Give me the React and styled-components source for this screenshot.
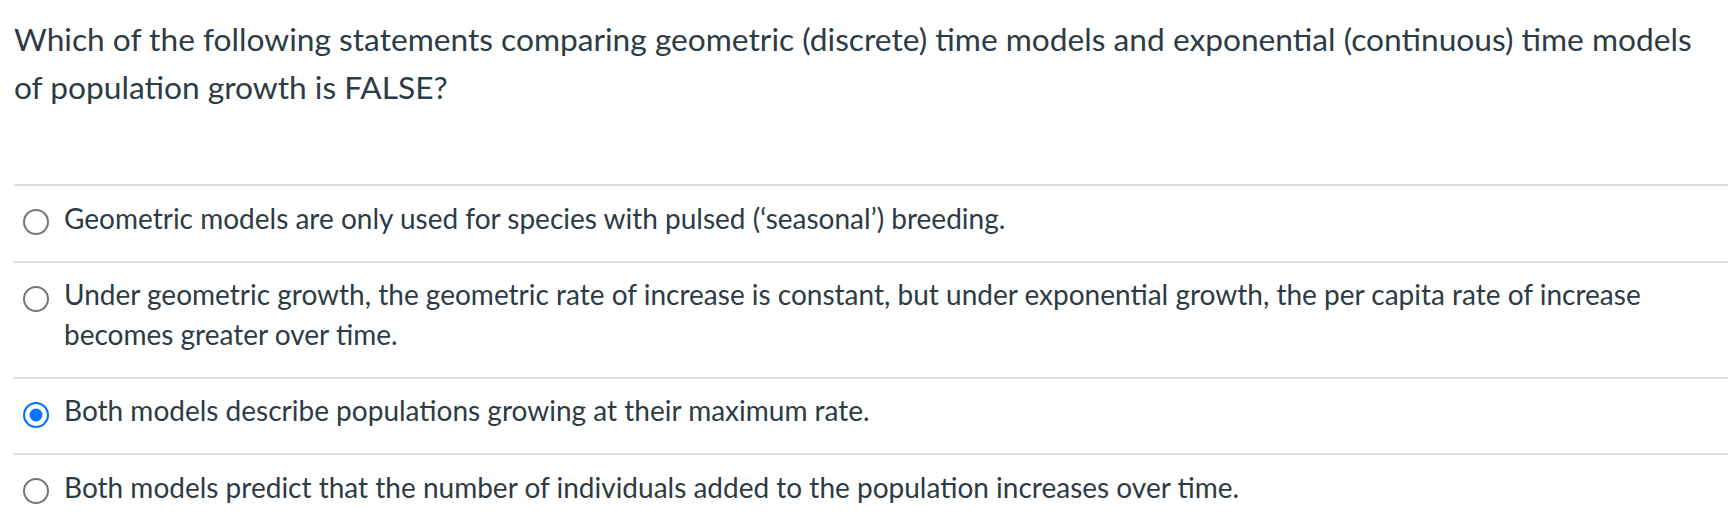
import React, { useState } from "react";
import styled, { createGlobalStyle } from "styled-components";

const GlobalStyle = createGlobalStyle`
  body {
    margin: 0;
    background: #ffffff;
    font-family: Lato, "Open Sans", "Liberation Sans", sans-serif;
    color: #2d3b45;
  }
`;

const QuizArea = styled.div`
  width: 1714px;
  padding: 15px 0 0 14px;
`;

const QuestionText = styled.div`
  max-width: 1705px;
  font-size: 31.7px;
  line-height: 48px;
  margin-bottom: 73px;
`;

const AnswerList = styled.div`
  display: flex;
  flex-direction: column;
`;

const AnswerRow = styled.label`
  display: flex;
  flex-direction: row;
  align-items: flex-start;
  border-top: 2px solid #dddddd;
  padding: 12.5px 0 22.5px 9px;
  cursor: pointer;
`;

const RadioMark = styled.span`
  flex: 0 0 auto;
  box-sizing: border-box;
  width: 26px;
  height: 26px;
  margin-top: 10.5px;
  border-radius: 50%;
  border: 2px solid ${(p) => (p.checked ? "#0b74ff" : "#767676")};
  background: ${(p) => (p.checked ? "#0b74ff" : "#ffffff")};
  box-shadow: ${(p) => (p.checked ? "inset 0 0 0 4.5px #ffffff" : "none")};
`;

const AnswerText = styled.span`
  font-size: 28px;
  line-height: 39.5px;
  padding-left: 15px;
  padding-right: 40px;
`;

const answers = [
  "Geometric models are only used for species with pulsed (‘seasonal’) breeding.",
  "Under geometric growth, the geometric rate of increase is constant, but under exponential growth, the per capita rate of increase becomes greater over time.",
  "Both models describe populations growing at their maximum rate.",
  "Both models predict that the number of individuals added to the population increases over time.",
];

export default function App() {
  const [picked, setPicked] = useState(2);

  return (
    <>
      <GlobalStyle />
      <QuizArea>
        <QuestionText>
          Which of the following statements comparing geometric (discrete) time models and exponential (continuous) time models of population growth is FALSE?
        </QuestionText>
        <AnswerList>
          {answers.map((text, i) => (
            <AnswerRow key={i} onClick={() => setPicked(i)}>
              <RadioMark checked={picked === i} />
              <AnswerText>{text}</AnswerText>
            </AnswerRow>
          ))}
        </AnswerList>
      </QuizArea>
    </>
  );
}
